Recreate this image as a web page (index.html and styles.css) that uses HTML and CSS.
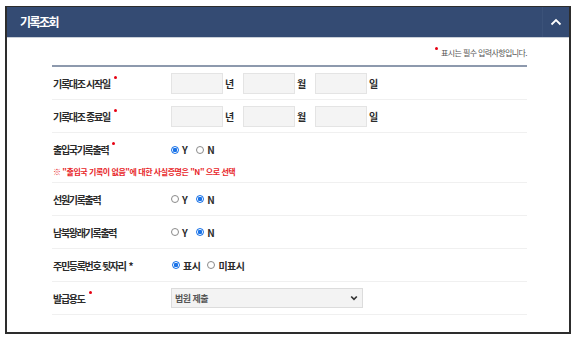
FILE: index.html
```html
<!DOCTYPE html>
<html lang="ko">
<head>
<meta charset="utf-8">
<link rel="stylesheet" href="styles.css">
</head>
<body>
<div class="panel">
  <div class="panel-head">
    <h2 class="panel-title">기록조회</h2>
    <button class="toggle" type="button" aria-label="접기">
      <svg width="12" height="8" viewBox="0 0 12 8"><path d="M1.5 6.5 L6 2 L10.5 6.5" fill="none" stroke="#fff" stroke-width="1.8"/></svg>
    </button>
  </div>
  <div class="panel-body">
    <p class="req-note"><span class="dot"></span>표시는 필수 입력사항입니다.</p>
    <div class="form">
      <div class="row">
        <div class="label req">기록대조 시작일</div>
        <div class="field">
          <span class="box"></span><span class="unit">년</span>
          <span class="box"></span><span class="unit">월</span>
          <span class="box"></span><span class="unit">일</span>
        </div>
      </div>
      <div class="row">
        <div class="label req">기록대조 종료일</div>
        <div class="field">
          <span class="box"></span><span class="unit">년</span>
          <span class="box"></span><span class="unit">월</span>
          <span class="box"></span><span class="unit">일</span>
        </div>
      </div>
      <div class="row row-note">
        <div class="row-main">
          <div class="label req">출입국기록출력</div>
          <div class="field">
            <span class="opt"><span class="radio on"></span>Y</span>
            <span class="opt"><span class="radio"></span>N</span>
          </div>
        </div>
        <p class="warn">※ "출입국 기록이 없음"에 대한 사실증명은 "N" 으로 선택</p>
      </div>
      <div class="row">
        <div class="label">선원기록출력</div>
        <div class="field">
          <span class="opt"><span class="radio"></span>Y</span>
          <span class="opt"><span class="radio on"></span>N</span>
        </div>
      </div>
      <div class="row">
        <div class="label">남북왕래기록출력</div>
        <div class="field">
          <span class="opt"><span class="radio"></span>Y</span>
          <span class="opt"><span class="radio on"></span>N</span>
        </div>
      </div>
      <div class="row">
        <div class="label">주민등록번호 뒷자리<span class="star">*</span></div>
        <div class="field field-wide">
          <span class="opt"><span class="radio on"></span>표시</span>
          <span class="opt"><span class="radio"></span>미표시</span>
        </div>
      </div>
      <div class="row">
        <div class="label req">발급용도</div>
        <div class="field">
          <div class="select">
            <span>법원 제출</span>
            <svg width="8" height="6" viewBox="0 0 8 6"><path d="M1.2 1.5 L4 4.3 L6.8 1.5" fill="none" stroke="#333" stroke-width="1.7"/></svg>
          </div>
        </div>
      </div>
    </div>
  </div>
</div>
</body>
</html>
```

FILE: styles.css
```css
* { box-sizing: border-box; }
html, body { margin: 0; padding: 0; background: #fff; }
body {
  font-family: "Noto Sans CJK KR", "Noto Sans", sans-serif;
  color: #333;
  padding: 6px 0 0 5px;
}
.panel {
  width: 566px;
  height: 328px;
  border: 2px solid #2d2d2d;
  border-top-width: 1px;
}
.panel-head {
  height: 31px;
  background: #344b73;
  display: flex;
  align-items: center;
  justify-content: space-between;
  border-bottom: 1px solid #c9cfd8;
}
.panel-title {
  margin: 0 0 0 13px;
  color: #fff;
  font-size: 12px;
  font-weight: 700;
  letter-spacing: -1.5px;
  line-height: 1;
}
.toggle {
  width: 27px;
  height: 30px;
  border: 0;
  border-left: 1px solid #3b5279;
  background: #344b73;
  padding: 0;
  display: flex;
  align-items: center;
  justify-content: center;
}
.panel-body {
  padding: 8px 42px 0 45px;
}
.req-note {
  margin: 0;
  text-align: right;
  font-size: 8px;
  color: #555;
  letter-spacing: -0.6px;
  line-height: 12px;
  height: 19px;
  padding-top: 1px;
}
.req-note .dot {
  display: inline-block;
  width: 3px;
  height: 3px;
  border-radius: 50%;
  background: #e60012;
  vertical-align: 6px;
  margin-right: 3px;
}
.form {
  border-top: 2px solid #8d99ad;
}
.row {
  display: flex;
  align-items: center;
  height: 33px;
  border-bottom: 1px solid #f0f0f0;
}
.row-note {
  display: block;
  height: 50px;
}
.row-main {
  display: flex;
  align-items: center;
  height: 33px;
}
.label {
  width: 119px;
  flex: none;
  font-size: 10px;
  font-weight: 700;
  letter-spacing: -1.3px;
  color: #2b2b2b;
  padding-left: 1px;
}
.label .star { margin-left: 3px; }
.label.req::after {
  content: "";
  display: inline-block;
  width: 3px;
  height: 3px;
  border-radius: 50%;
  background: #e60012;
  margin-left: 4px;
  vertical-align: 9px;
}
.field {
  display: flex;
  align-items: center;
}
.box {
  width: 52px;
  height: 21px;
  background: #f4f4f4;
  border: 1px solid #e4e4e4;
}
.unit {
  font-size: 10px;
  font-weight: 700;
  width: 20px;
  padding-left: 2px;
  color: #2b2b2b;
}
.opt {
  display: inline-flex;
  align-items: center;
  font-size: 10px;
  font-weight: 700;
  color: #2b2b2b;
  margin-right: 9px;
  letter-spacing: -0.5px;
}
.radio {
  width: 8px;
  height: 8px;
  border-radius: 50%;
  border: 1px solid #8a8a8a;
  margin-right: 3px;
  background: #fff;
}
.radio.on {
  border-color: #1a73e8;
  background: radial-gradient(circle, #1a73e8 0 2px, #fff 2.5px 2.8px, #4a90ee 3.3px);
}
.field-wide .opt { margin-right: 6px; }
.field-wide .radio { margin-left: 1px; }
.warn {
  margin: 0;
  font-size: 8px;
  font-weight: 700;
  color: #e8262a;
  letter-spacing: -0.45px;
  line-height: 12px;
  padding-left: 1px;
}
.select {
  width: 192px;
  height: 20px;
  background: #f3f3f3;
  border: 1px solid #dcdcdc;
  display: flex;
  align-items: center;
  justify-content: space-between;
  padding: 0 4px 0 3px;
  font-size: 9px;
  font-weight: 700;
  color: #555;
  letter-spacing: -0.5px;
}
```
